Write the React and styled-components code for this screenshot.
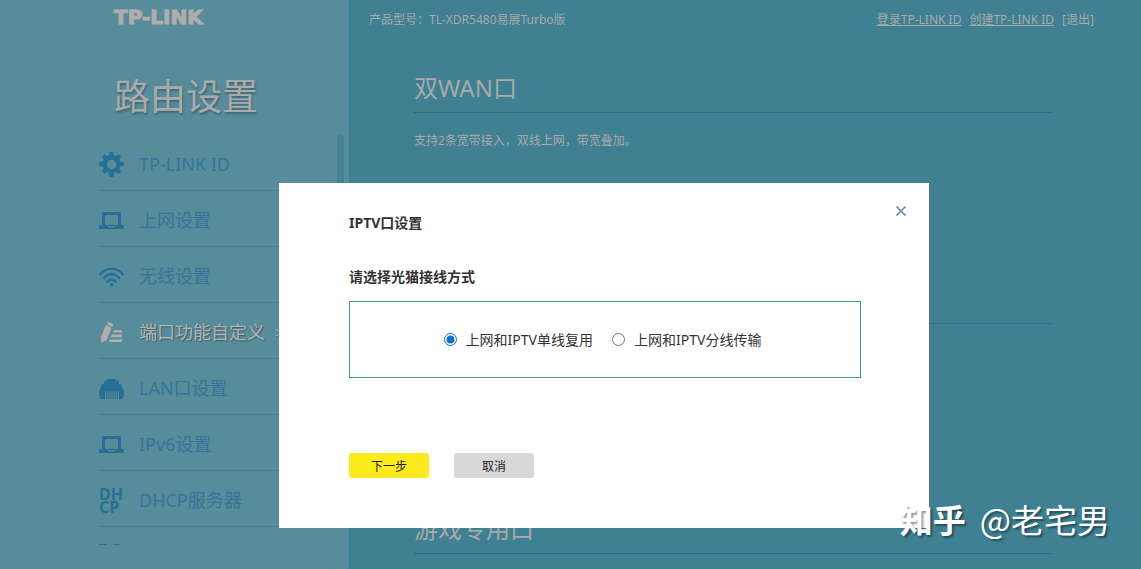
import React, {useState} from "react";
import styled, {createGlobalStyle} from "styled-components";

const GlobalStyle = createGlobalStyle`
  * {
    box-sizing: border-box;
  }

  body {
    margin: 0;
    background-color: #3f8092;
    font-family: 'Noto Sans', 'Noto Sans CJK SC', sans-serif;
    font-size: 12px;
    color: #a9a9a9;
  }
`

const Page = styled.div`
  display: flex;
  height: 100vh;
  overflow: hidden;
`

const Sidebar = styled.aside`
  display: flex;
  flex-direction: column;
  flex: 0 0 349px;
  padding: 7px 5px 24px 99px;
  background-color: #578c9b;
`

const Logo = styled.div`
  padding-left: 15px;
  font-family: 'DejaVu Sans', sans-serif;
  font-size: 20px;
  font-weight: 700;
  line-height: 20px;
  color: #b2adad;
  -webkit-text-stroke: 1px #b2adad;
`

const SidebarTitle = styled.h1`
  margin: 50px 0 18px;
  padding-left: 15px;
  font-size: 36px;
  font-weight: 400;
  line-height: 40px;
  color: #aaa;
  text-shadow: 1px 2px 2px rgba(40, 70, 80, .5);
`

const MenuArea = styled.nav`
  display: flex;
  justify-content: space-between;
  flex: 1;
  min-height: 0;
  overflow: hidden;
`

const MenuList = styled.ul`
  flex: 1;
  margin: 0 13px 0 0;
  padding: 0;
  list-style: none;
`

const ScrollThumb = styled.div`
  width: 7px;
  height: 240px;
  border-radius: 3px;
  background-color: #438493;
`

const MenuLink = styled.a`
  display: flex;
  align-items: center;
  gap: 15px;
  height: 56px;
  padding-top: 4px;
  border-bottom: 1px solid #487f8f;
  font-size: 18px;
  color: ${props => props.$active ? '#b5b3b1' : '#34769a'};
  text-decoration: none;
  text-shadow: ${props => props.$active ? '1px 1px 1px rgba(40, 60, 70, .6)' : 'none'};
  white-space: nowrap;

  svg {
    flex: none;
    fill: ${props => props.$active ? '#b5adad' : '#286f95'};
  }
`

const MenuLabel = styled.span`
  padding-bottom: 2px;
  line-height: 24px;
`

const LetterIcon = styled.span`
  display: flex;
  flex-direction: column;
  flex: none;
  width: 25px;
  font-size: 16px;
  font-weight: 700;
  line-height: 13px;
  color: #286f95;
`

const Arrow = styled.span`
  margin-left: -5px;
  font-size: 14px;
`

const Main = styled.main`
  flex: 1;
  min-width: 0;
`

const TopBar = styled.header`
  display: flex;
  justify-content: space-between;
  padding: 10px 47px 0 20px;
  line-height: 20px;
`

const Links = styled.div`
  display: flex;
  gap: 8px;
`

const TopLink = styled.a`
  color: inherit;
  text-decoration: ${props => props.$plain ? 'none' : 'underline'};
`

const Sections = styled.div`
  padding-top: 42px;
`

const Section = styled.section`
  min-height: ${props => props.$height}px;
  margin: 0 90px 0 65px;
`

const SectionTitle = styled.h2`
  margin: 0;
  padding-bottom: 8px;
  font-size: 24px;
  font-weight: 400;
  line-height: 32px;
`

const SectionLine = styled.hr`
  height: 1px;
  margin: 0;
  border: 0;
  background-color: #2b6c82;
`

const SectionText = styled.p`
  margin: 18px 0 0;
  line-height: 20px;
`

const Dialog = styled.div`
  position: absolute;
  top: 183px;
  left: 279px;
  width: 650px;
  padding: 30px 68px 50px 70px;
  background-color: #fff;
  color: #333;
`

const DialogTitle = styled.h3`
  margin: 0;
  font-size: 14px;
  font-weight: 700;
  line-height: 20px;
`

const CloseButton = styled.button`
  position: absolute;
  top: 17px;
  right: 17px;
  display: flex;
  padding: 5px;
  border: 0;
  background: none;
  cursor: pointer;
`

const Options = styled.fieldset`
  margin: 0;
  padding: 0;
  border: 0;
`

const Legend = styled.legend`
  padding: 34px 0 14px;
  font-size: 14px;
  font-weight: 700;
  line-height: 20px;
`

const OptionBox = styled.div`
  display: flex;
  justify-content: center;
  gap: 19px;
  padding: 28px 5px 28px 0;
  border: 1px solid #3a9a9c;
`

const Option = styled.label`
  display: flex;
  align-items: center;
  gap: 9px;
  font-size: 14px;
  line-height: 19px;
`

const Radio = styled.input`
  width: 13px;
  height: 13px;
  margin: 0;
  accent-color: #0a70d0;
`

const Actions = styled.div`
  display: flex;
  gap: 25px;
  margin-top: 75px;
`

const Button = styled.button`
  width: 80px;
  height: 25px;
  padding: 0;
  border: 0;
  border-radius: 3px;
  background-color: ${props => props.$primary ? '#fbea1c' : '#d8d8d8'};
  font-family: inherit;
  font-size: 12px;
  color: #222;
  cursor: pointer;
`

const Watermark = styled.div`
  position: absolute;
  right: 31px;
  bottom: 30px;
  display: flex;
  gap: 14px;
  font-family: 'Noto Sans CJK SC', sans-serif;
  font-size: 33px;
  line-height: 40px;
  color: #fff;
  text-shadow: 2px 2px 2px rgba(0, 0, 0, .4);

  strong {
    font-weight: 700;
  }
`

const GearIcon = () => (
    <svg width="25" height="25" viewBox="0 0 25 25">
        <path fillRule="evenodd" d="M10.700 0h3.600l.6 3.200 2 .8 2.700-1.900 2.500 2.500-1.900 2.800.9 2 3.900.9v3.500l-3.900.8-.9 2.100 2 2.800-2.600 2.600-2.700-2-2 .9-.6 4h-3.600l-.7-4-2-.9-2.700 2-2.500-2.600 1.900-2.800-.9-2.100-3.800-.8v-3.500l3.800-.9.9-2-1.900-2.800 2.500-2.500L8 4l2-.8zM12.500 7.800a4.700 4.700 0 1 0 0 9.400 4.700 4.700 0 0 0 0-9.400z"/>
    </svg>
)

const LaptopIcon = () => (
    <svg width="25" height="17" viewBox="0 0 25 17">
        <path fillRule="evenodd" d="M3 1.500Q3 0 4.500 0h16Q22 0 22 1.500V13h3v3q0 1-1 1H1q-1 0-1-1v-3h3zM6 3v10h13V3zM9 14.200v1.300h7v-1.300z"/>
    </svg>
)

const WifiIcon = () => (
    <svg width="25" height="20" viewBox="0 0 25 20">
        <g style={{fill: 'none'}} stroke="#286f95" strokeWidth="2.4" strokeLinecap="round">
            <path d="M1.300 7.200C7.500-.3 17.500-.3 23.700 7.200"/>
            <path d="M5 11c4.300-5 10.700-5 15 0"/>
            <path d="M8.500 14.600c2.300-2.600 5.700-2.600 8 0"/>
        </g>
        <circle cx="12.500" cy="17.800" r="1.900"/>
    </svg>
)

const PencilIcon = () => (
    <svg width="25" height="21" viewBox="0 0 25 21">
        <path d="M8.800.8Q9.500-.3 10.700.3l2.700 1.500q1.100.7.500 1.800l-.8 1.200-5.200-2.700zM7.200 3.100l5.300 2.900L7.600 18.200 2 20.600l.1-6.200z"/>
        <path d="M15 8h8v2.600h-9.300zM13 12.600h10v2.600H11.800zM11 17.400h12V20H9.700z"/>
    </svg>
)

const LanIcon = () => (
    <svg width="25" height="20" viewBox="0 0 25 20">
        <path d="M9 0h7l1 1.500h2l1 1.500v2h1.500l1.500 2v2l1.500 1.500Q25 11.500 25 13v3q0 1.500-1.500 2.500V20H20v-7.500h-1V20h-1v-7.500h-1.200V20h-1v-7.500h-1.200V20h-1v-7.500h-1.200V20h-1v-7.500h-1.200V20h-1v-7.500H8.200V20h-1v-7.500H6V20H1.500v-1.500Q0 17.500 0 16v-3q0-1.500.5-2.500L2 9V7l1.500-2H5V3l1-1.500h2z"/>
    </svg>
)

const MoreIcon = () => (
    <svg width="25" height="25" viewBox="0 0 25 25">
        <path d="M0 0h8v2H0zM14 0h7v2h-7z"/>
    </svg>
)

const menu = [
    {name: 'TP-LINK ID', icon: <GearIcon/>},
    {name: '上网设置', icon: <LaptopIcon/>},
    {name: '无线设置', icon: <WifiIcon/>},
    {name: '端口功能自定义', icon: <PencilIcon/>, active: true},
    {name: 'LAN口设置', icon: <LanIcon/>},
    {name: 'IPv6设置', icon: <LaptopIcon/>},
    {name: 'DHCP服务器', icon: <LetterIcon><span>DH</span><span>CP</span></LetterIcon>},
]

const modes = [
    {id: 'single', name: '上网和IPTV单线复用'},
    {id: 'split', name: '上网和IPTV分线传输'},
]

const App = () => {

    const [mode, setMode] = useState('single');
    const [isDialogVisible, setIsDialogVisible] = useState(true);

    const handleClose = () => {
        setIsDialogVisible(false);
    }

    return(
      <>
          <GlobalStyle/>
          <Page lang="zh-CN">
              <Sidebar>
                  <Logo>TP-LINK</Logo>
                  <SidebarTitle>路由设置</SidebarTitle>
                  <MenuArea>
                      <MenuList>
                          {menu.map(item => (
                              <li key={item.name}>
                                  <MenuLink href="#" $active={item.active}>
                                      {item.icon}
                                      <MenuLabel>{item.name}</MenuLabel>
                                      {item.active && <Arrow>&gt;</Arrow>}
                                  </MenuLink>
                              </li>
                          ))}
                          <li>
                              <MenuLink href="#" aria-label="更多"><MoreIcon/></MenuLink>
                          </li>
                      </MenuList>
                      <ScrollThumb/>
                  </MenuArea>
              </Sidebar>

              <Main>
                  <TopBar>
                      <span>产品型号：TL-XDR5480易展Turbo版</span>
                      <Links>
                          <TopLink href="#">登录TP-LINK ID</TopLink>
                          <TopLink href="#">创建TP-LINK ID</TopLink>
                          <TopLink href="#" $plain>[退出]</TopLink>
                      </Links>
                  </TopBar>
                  <Sections>
                      <Section $height={251}>
                          <SectionTitle>双WAN口</SectionTitle>
                          <SectionLine/>
                          <SectionText>支持2条宽带接入，双线上网，带宽叠加。</SectionText>
                      </Section>
                      <Section $height={190}>
                          <SectionLine/>
                      </Section>
                      <Section $height={50}>
                          <SectionTitle>游戏专用口</SectionTitle>
                          <SectionLine/>
                      </Section>
                  </Sections>
              </Main>

              {isDialogVisible && (
                  <Dialog role="dialog" aria-labelledby="dialog-title">
                      <DialogTitle id="dialog-title">IPTV口设置</DialogTitle>
                      <CloseButton type="button" aria-label="关闭" onClick={handleClose}>
                          <svg width="12" height="12" viewBox="0 0 12 12">
                              <path d="M1.500 1.500l9 9M10.500 1.500l-9 9" stroke="#5f87a3" strokeWidth="1.6"/>
                          </svg>
                      </CloseButton>
                      <Options>
                          <Legend>请选择光猫接线方式</Legend>
                          <OptionBox>
                              {modes.map(item => (
                                  <Option key={item.id} htmlFor={item.id}>
                                      <Radio
                                          type="radio"
                                          name="mode"
                                          id={item.id}
                                          checked={mode === item.id}
                                          onChange={() => setMode(item.id)}
                                      />
                                      {item.name}
                                  </Option>
                              ))}
                          </OptionBox>
                      </Options>
                      <Actions>
                          <Button type="button" $primary>下一步</Button>
                          <Button type="button" onClick={handleClose}>取消</Button>
                      </Actions>
                  </Dialog>
              )}

              <Watermark>
                  <strong>知乎</strong>
                  <span>@老宅男</span>
              </Watermark>
          </Page>
      </>
    );
}

export default App;
